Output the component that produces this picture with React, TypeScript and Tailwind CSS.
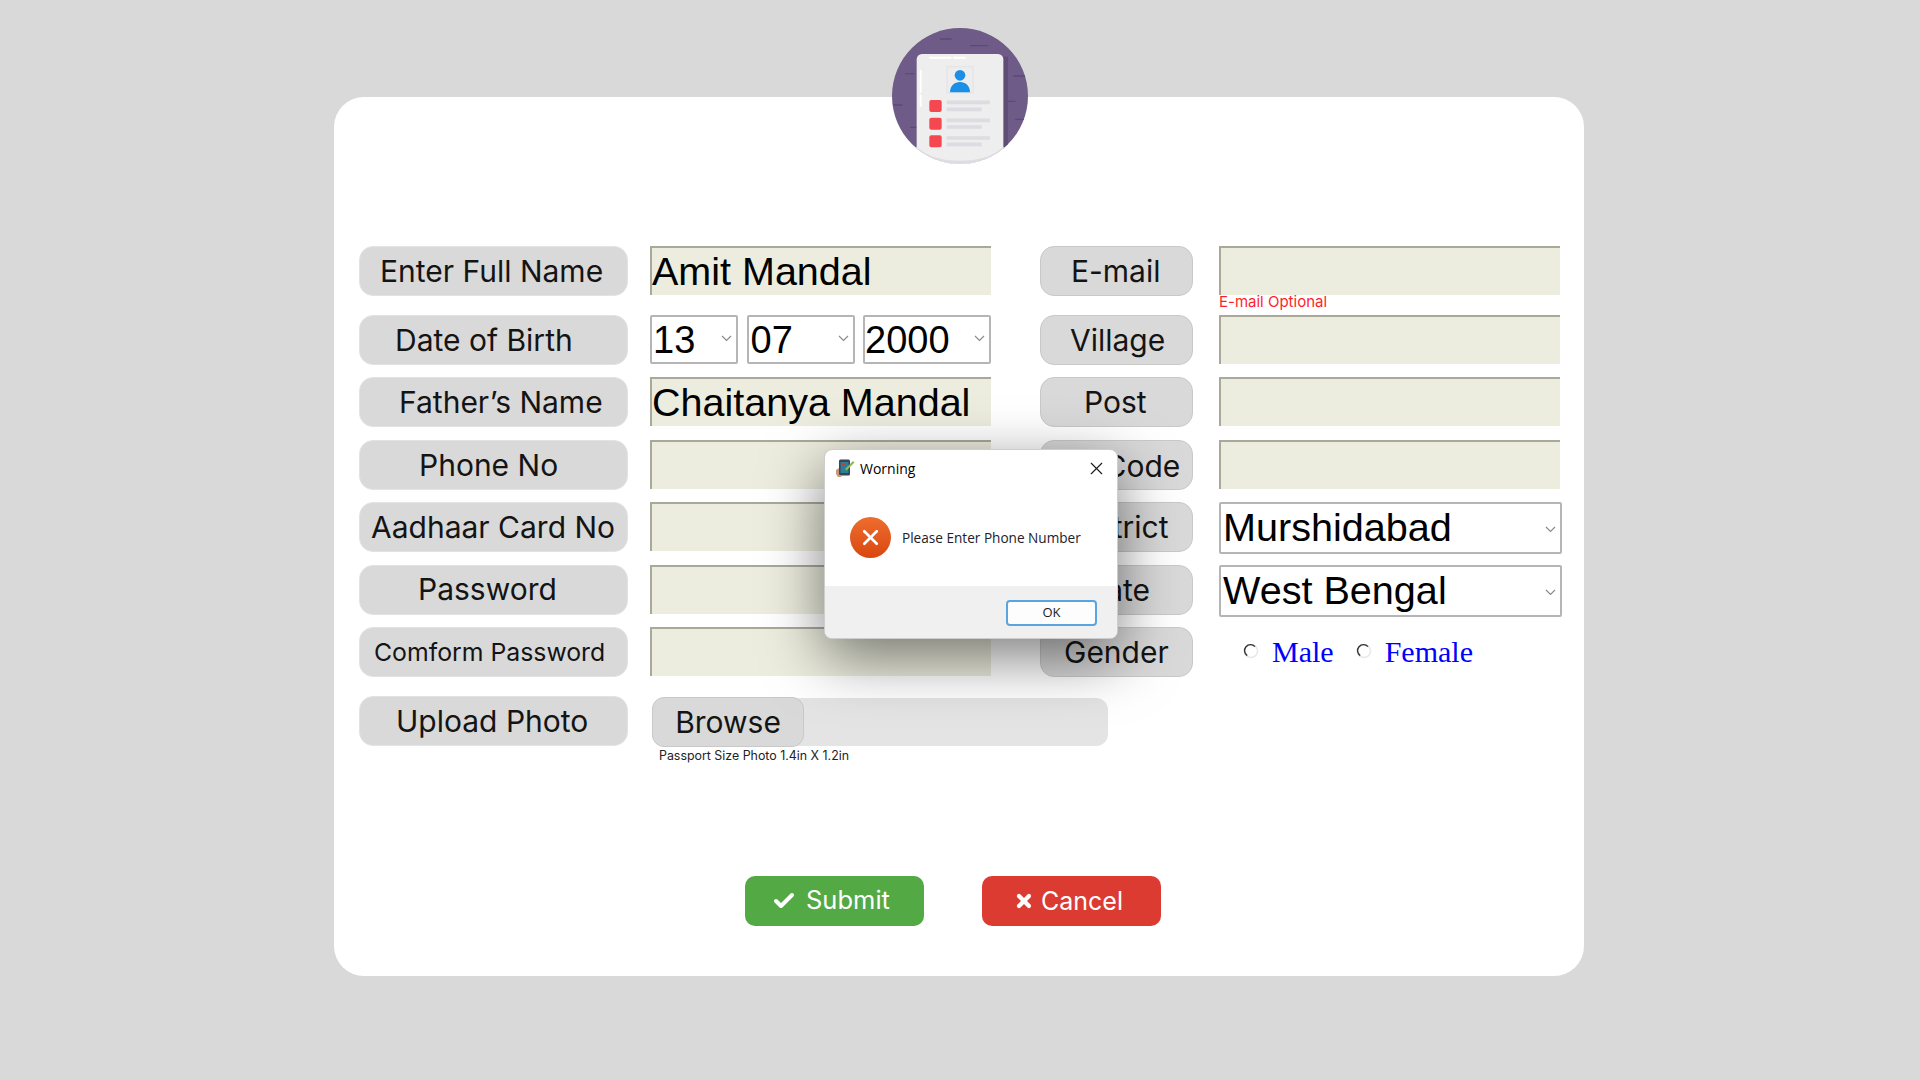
import React from "react";
import { Check, X } from "lucide-react";

const inter = "font-['Inter','Noto_Sans',sans-serif]";
const arial = "font-['Liberation_Sans',Arial,sans-serif]";

function LeftLabel({ text, pad, size }: { text: string; pad: string; size: string }) {
  return (
    <div className={`w-[269px] h-[50px] shrink-0 rounded-[14px] bg-[#d9d9d9] border border-[#e3e3e3] flex items-center text-[#141414] whitespace-nowrap ${inter} ${pad} ${size}`}>
      {text}
    </div>
  );
}

function RightLabel({ text, pad, size = "text-[30px]" }: { text: string; pad: string; size?: string }) {
  return (
    <div className={`w-[153px] h-[50px] shrink-0 rounded-[14px] bg-[#d9d9d9] border border-[#c9c9c9] flex items-center text-[#141414] whitespace-nowrap ${inter} ${pad} ${size}`}>
      {text}
    </div>
  );
}

function Field({ value = "" }: { value?: string }) {
  return (
    <input
      readOnly
      value={value}
      className={`block w-[341px] h-[49px] shrink-0 bg-[#ecedde] border-t-2 border-l-2 border-[#a9a99a] pl-0 text-[39.5px] text-black outline-none ${arial}`}
    />
  );
}

function Chevron({ className }: { className: string }) {
  return (
    <svg width="11" height="7" viewBox="0 0 11 7" className={className}>
      <path d="M1 1l4.5 4.5L10 1" fill="none" stroke="#8a8a8a" strokeWidth="1.2" />
    </svg>
  );
}

function DateSelect({ value, width, pad }: { value: string; width: string; pad: string }) {
  return (
    <div className={`relative h-[49px] bg-white border-2 border-[#b5b5b5] rounded-[2px] flex items-center pt-[2px] text-[38px] text-black ${arial} ${width} ${pad}`}>
      {value}
      <Chevron className="absolute right-[4px] top-[18px]" />
    </div>
  );
}

function BigSelect({ value }: { value: string }) {
  return (
    <div className={`relative w-[343px] h-[52px] bg-white border-2 border-[#b5b5b5] rounded-[2px] flex items-center pl-[2px] text-[39.6px] text-black ${arial}`}>
      {value}
      <Chevron className="absolute right-[4px] top-[22px]" />
    </div>
  );
}

function Radio() {
  return (
    <svg width="16" height="16" viewBox="0 0 16 16" className="shrink-0">
      <circle cx="8" cy="8" r="6.5" fill="#fff" stroke="#e8e8e8" strokeWidth="1.5" />
      <path d="M12 3.6A6 6 0 1 0 4.2 12.6" fill="none" stroke="#333" strokeWidth="1.4" />
    </svg>
  );
}

function Avatar() {
  return (
    <svg viewBox="96 54 408 408" width="136" height="136" className="absolute left-[558px] top-[-69px]">
      <defs>
        <clipPath id="disc"><circle cx="300" cy="258" r="204" /></clipPath>
      </defs>
      <circle cx="300" cy="258" r="204" fill="#6f5b87" />
      <g clipPath="url(#disc)">
        <g stroke="#5d4a75" strokeWidth="4">
          <path d="M240 87h35M330 107h55M135 191h28M460 198h35M100 285h28M438 274h28M150 352h22M465 328h28" />
        </g>
        <rect x="430" y="140" width="14" height="280" fill="#5f4d76" />
        <path d="M170 148a16 16 0 0 1 16-16h228a16 16 0 0 1 16 16v320H170z" fill="#eeeeee" />
        <path d="M96 404c60 42 130 50 204 50s144-8 204-50v60H96z" fill="#ffffff" />
        <path d="M168 410c40 34 84 42 132 42s92-8 132-42v12c-40 32-84 40-132 40s-92-8-132-40z" fill="#dcdce2" />
        <path d="M210 143h62M282 143h32" stroke="#ffffff" strokeWidth="6" strokeLinecap="round" />
        <path d="M182 182v64M182 256v32" stroke="#ffffff" strokeWidth="6" strokeLinecap="round" />
        <rect x="259" y="168" width="82" height="82" fill="#e5e5e7" />
        <rect x="263" y="172" width="74" height="74" fill="#ededee" />
        <circle cx="300" cy="196" r="16" fill="#1b8fe6" />
        <path d="M270 247c0-20 13-31 30-31s30 11 30 31z" fill="#1b8fe6" />
        <g fill="#f4474f">
          <rect x="208" y="270" width="37" height="36" rx="6" />
          <rect x="208" y="323" width="37" height="36" rx="6" />
          <rect x="208" y="376" width="37" height="36" rx="6" />
        </g>
        <g stroke="#dcdce2" strokeWidth="11">
          <path d="M260 277h130M260 298h105M260 331h130M260 351h105M260 384h130M260 403h105" />
        </g>
      </g>
    </svg>
  );
}

function WindowIcon() {
  return (
    <svg width="20" height="20" viewBox="0 0 20 20" className="shrink-0">
      <path d="M1 12l3-2v7l3 2H3l-2-3z" fill="#c79a7d" />
      <rect x="4" y="1.5" width="11" height="16" rx="1.5" fill="#3a4552" />
      <rect x="5.5" y="4" width="8" height="11" fill="#2b7f97" />
      <rect x="7" y="6" width="4" height="2" fill="#b8434b" />
      <path d="M10 11l8-8 1.5 1.5-8 8z" fill="#90b94d" />
    </svg>
  );
}

function Dialog() {
  return (
    <div className="absolute left-[490px] top-[352px] w-[294px] h-[190px] rounded-[8px] bg-white border border-[#9c9c9c]/50 shadow-[0_18px_60px_rgba(0,0,0,0.52)] overflow-hidden flex flex-col font-['Open_Sans','Noto_Sans',sans-serif]">
      <div className="h-[136px] flex flex-col">
        <div className="h-[36px] flex items-center pl-[10px] pr-[10px]">
          <WindowIcon />
          <span className="ml-[5px] text-[14px] text-black">Worning</span>
          <X className="ml-auto text-[#1a1a1a]" size={21} strokeWidth={1.3} />
        </div>
        <div className="flex items-center pl-[25px] mt-[31px]">
          <div className="w-[41px] h-[41px] rounded-full bg-gradient-to-b from-[#ee6c2e] to-[#d9470d] flex items-center justify-center">
            <X className="text-white" size={25} strokeWidth={2.5} />
          </div>
          <span className="ml-[11px] mt-[1px] text-[13.6px] font-medium text-[#20202c] whitespace-nowrap">Please Enter Phone Number</span>
        </div>
      </div>
      <div className="flex-1 bg-[#f0f0f0] flex justify-end items-start pt-[14px] pr-[20px]">
        <div className="w-[91px] h-[26px] rounded-[4px] border-2 border-[#5aa5e0] bg-[#fdfdfd] flex items-center justify-center text-[13px] font-medium text-[#1a1a1a]">
          OK
        </div>
      </div>
    </div>
  );
}

export default function App() {
  return (
    <div className="w-full h-[1080px] overflow-hidden bg-[#d9d9d9] pt-[97px]">
      <div className="relative mx-auto w-[1250px] h-[879px] rounded-[30px] bg-white pt-[149px] pl-[24px] translate-x-[-1px]">
        <Avatar />

        <div className="flex h-[69px]">
          <div className="ml-[1px]"><LeftLabel text="Enter Full Name" pad="pl-[20px]" size="text-[30px]" /></div>
          <div className="ml-[22px] w-[341px]"><Field value="Amit Mandal" /></div>
          <div className="ml-[49px]"><RightLabel text="E-mail" pad="pl-[30px]" /></div>
          <div className="ml-[26px]">
            <Field />
            <div className={`text-[15px] leading-[20px] mt-[-3px] text-[#ff1e2d] ${inter}`}>E-mail Optional</div>
          </div>
        </div>

        <div className="flex h-[62px]">
          <div className="ml-[1px]"><LeftLabel text="Date of Birth" pad="pl-[35px]" size="text-[30px]" /></div>
          <div className="ml-[22px] w-[341px] flex justify-between">
            <DateSelect value="13" width="w-[88px]" pad="pl-[1px]" />
            <DateSelect value="07" width="w-[108px]" pad="pl-[2px]" />
            <DateSelect value="2000" width="w-[128px]" pad="pl-[0px]" />
          </div>
          <div className="ml-[49px]"><RightLabel text="Village" pad="pl-[29px]" /></div>
          <div className="ml-[26px]"><Field /></div>
        </div>

        <div className="flex h-[63px]">
          <div className="ml-[1px]"><LeftLabel text="Father’s Name" pad="pl-[39px]" size="text-[30px]" /></div>
          <div className="ml-[22px] w-[341px]"><Field value="Chaitanya Mandal" /></div>
          <div className="ml-[49px]"><RightLabel text="Post" pad="pl-[43px]" /></div>
          <div className="ml-[26px]"><Field /></div>
        </div>

        <div className="flex h-[62px]">
          <div className="ml-[1px]"><LeftLabel text="Phone No" pad="pl-[59px]" size="text-[30px]" /></div>
          <div className="ml-[22px] w-[341px]"><Field /></div>
          <div className="ml-[49px]"><RightLabel text="Pin Code" pad="pl-[11px] pt-[2px]" /></div>
          <div className="ml-[26px]"><Field /></div>
        </div>

        <div className="flex h-[63px]">
          <div className="ml-[1px]"><LeftLabel text="Aadhaar Card No" pad="pl-[11px] pt-[1px]" size="text-[30px]" /></div>
          <div className="ml-[22px] w-[341px]"><Field /></div>
          <div className="ml-[49px]"><RightLabel text="District" pad="pl-[27px] pt-[1px]" /></div>
          <div className="ml-[26px]"><BigSelect value="Murshidabad" /></div>
        </div>

        <div className="flex h-[62px]">
          <div className="ml-[1px]"><LeftLabel text="Password" pad="pl-[58px] pb-[1px]" size="text-[30px]" /></div>
          <div className="ml-[22px] w-[341px]"><Field /></div>
          <div className="ml-[49px]"><RightLabel text="State" pad="pl-[36px]" /></div>
          <div className="ml-[26px]"><BigSelect value="West Bengal" /></div>
        </div>

        <div className="flex h-[69px]">
          <div className="ml-[1px]"><LeftLabel text="Comform Password" pad="pl-[14px] pt-[1px]" size="text-[24.8px]" /></div>
          <div className="ml-[22px] w-[341px]"><Field /></div>
          <div className="ml-[49px]"><RightLabel text="Gender" pad="pl-[23px]" /></div>
          <div className={`ml-[50px] h-[48px] flex items-center text-[30px] text-[#0000ff] font-['Liberation_Serif',serif]`}>
            <Radio />
            <span className="ml-[13px]">Male</span>
            <span className="ml-[22px]"><Radio /></span>
            <span className="ml-[13px]">Female</span>
          </div>
        </div>

        <div className="flex h-[180px]">
          <div className="ml-[1px]"><LeftLabel text="Upload Photo" pad="pl-[36px]" size="text-[30px]" /></div>
          <div className="ml-[24px]">
            <div className="w-[456px] h-[48px] mt-[2px] rounded-[12px] bg-[#e4e4e4] flex items-center">
              <div className={`w-[152px] h-[50px] shrink-0 rounded-[12px] bg-[#d9d9d9] border border-[#c9c9c9] flex items-center justify-center text-[30px] text-[#141414] ${inter}`}>
                Browse
              </div>
            </div>
            <div className={`ml-[7px] mt-[1px] text-[12.4px] leading-[18px] text-[#222] ${inter}`}>Passport Size Photo 1.4in X 1.2in</div>
          </div>
        </div>

        <div className={`flex pl-[387px] text-white ${inter}`}>
          <div className="w-[179px] h-[50px] rounded-[10px] bg-[#53a944] flex items-center pl-[27px] text-[25.5px]">
            <Check size={24} strokeWidth={4} />
            <span className="ml-[10px] -mt-[2px]">Submit</span>
          </div>
          <div className="ml-[58px] w-[179px] h-[50px] rounded-[10px] bg-[#dc3b32] flex items-center pl-[32px] text-[25px]">
            <X size={20} strokeWidth={5} />
            <span className="ml-[7px] mt-[1px]">Cancel</span>
          </div>
        </div>

        <Dialog />
      </div>
    </div>
  );
}
